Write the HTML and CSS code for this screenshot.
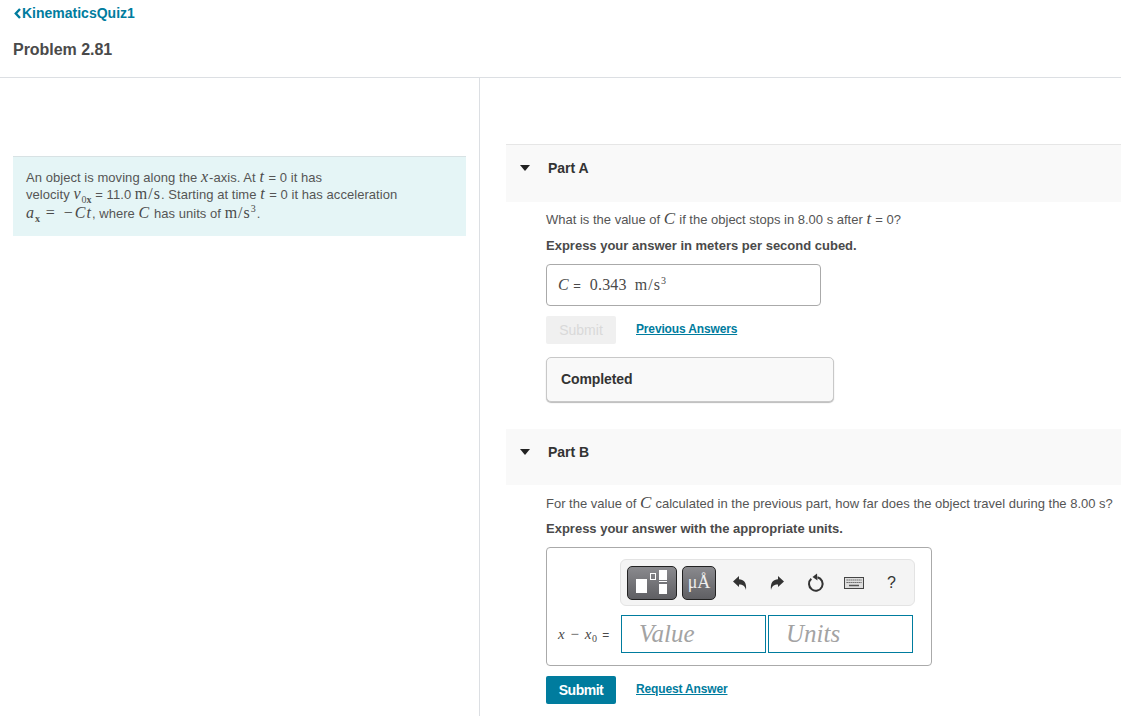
FILE: index.html
```html
<!DOCTYPE html>
<html lang="en">
<head>
<meta charset="utf-8">
<title>Problem 2.81</title>
<link rel="stylesheet" href="styles.css">
</head>
<body>
<header class="top">
  <a class="back" href="#"><svg class="chev" width="7" height="11" viewBox="0 0 7 11"><path d="M6 1 1.800 5.500 6 10" fill="none" stroke="#007c9e" stroke-width="2.400"/></svg>KinematicsQuiz1</a>
  <h1 class="title">Problem 2.81</h1>
</header>
<main class="columns">
  <aside class="left">
    <div class="intro">
      <div class="l1">An object is moving along the <i class="m">x</i>-axis. At <i class="m">t</i> = 0 it has</div>
      <div class="l2">velocity <i class="m">v</i><sub class="s">0<b>x</b></sub> = 11.0 <span class="m">m/s</span>. Starting at time <i class="m">t</i> = 0 it has acceleration</div>
      <div class="l3"><i class="m">a</i><sub class="s"><b>x</b></sub> <span class="m op">= −</span><i class="m">Ct</i>, where <i class="m">C</i> has units of <span class="m">m/s<sup class="p">3</sup></span>.</div>
    </div>
  </aside>
  <section class="right">
    <div class="part-head part-a"><svg class="tri" width="10" height="6" viewBox="0 0 10 6"><path d="M0 0H10L5 6Z" fill="#222"/></svg><span class="part-name">Part A</span></div>
    <div class="part-body">
      <p class="q">What is the value of <i class="m big">C</i> if the object stops in 8.00 s after <i class="m big">t</i> = 0?</p>
      <p class="ex">Express your answer in meters per second cubed.</p>
      <div class="answer"><i class="m big">C</i><span class="eq">=</span><span class="m val">0.343</span><span class="m unit">m/s<sup class="p">3</sup></span></div>
      <div class="actions"><span class="btn off">Submit</span><a class="link" href="#">Previous Answers</a></div>
      <div class="done">Completed</div>
    </div>
    <div class="part-head part-b"><svg class="tri" width="10" height="6" viewBox="0 0 10 6"><path d="M0 0H10L5 6Z" fill="#222"/></svg><span class="part-name">Part B</span></div>
    <div class="part-body">
      <p class="q q2">For the value of <i class="m big">C</i> calculated in the previous part, how far does the object travel during the 8.00 s?</p>
      <p class="ex ex2">Express your answer with the appropriate units.</p>
      <div class="editor">
        <div class="toolbar">
          <span class="tool wide"><svg width="44" height="28" viewBox="0 0 44 28"><rect x="6" y="10" width="11" height="14" fill="#fff"/><rect x="20.500" y="4.500" width="5" height="6" fill="none" stroke="#fff"/><rect x="29" y="1" width="8" height="10" fill="#fff"/><rect x="29" y="12" width="8" height="1" fill="#fff"/><rect x="29" y="15" width="8" height="10" fill="#fff"/></svg></span>
          <span class="tool mu">μÅ</span>
          <span class="icons">
            <svg class="ic" width="16" height="16" viewBox="0 0 16 16"><path d="M1 6.500 7 1V4.200C11.500 4.200 15 7.500 14 15 13 11 11 9.500 7 9.500V12Z" fill="#333"/></svg>
            <svg class="ic" width="16" height="16" viewBox="0 0 16 16"><path d="M15 6.500 9 1V4.200C4.500 4.200 1 7.500 2 15 3 11 5 9.500 9 9.500V12Z" fill="#333"/></svg>
            <svg class="ic" width="18" height="20" viewBox="0 0 18 20"><path d="M10.500 4.300A6.800 6.800 0 1 1 4.300 5.800" fill="none" stroke="#333" stroke-width="2"/><path d="M10 0.500 5.500 4 10.500 7.500Z" fill="#333"/></svg>
            <svg class="ic" width="20" height="12" viewBox="0 0 20 12"><rect x=".5" y=".5" width="19" height="11" fill="#ddd" stroke="#444"/><path d="M2.500 3H17.500M2.500 5.500H17.500" stroke="#555" stroke-dasharray="1.300 .7"/><path d="M5 8.500H15" stroke="#555" stroke-width="1.500"/></svg>
            <span class="help">?</span>
          </span>
        </div>
        <div class="entry">
          <span class="lhs"><i class="m">x</i> <span class="m">−</span> <i class="m">x</i><sub class="s">0</sub> =</span>
          <span class="field">Value</span><span class="field f2">Units</span>
        </div>
      </div>
      <div class="actions a2"><span class="btn on">Submit</span><a class="link" href="#">Request Answer</a></div>
    </div>
  </section>
</main>
</body>
</html>
```
FILE: styles.css
```css
* { box-sizing: border-box; }
html, body { margin: 0; height: 716px; overflow: hidden; background: #fff; }
body { font-family: "Liberation Sans", Arial, sans-serif; font-size: 13px; color: #555; }
.top { height: 78px; border-bottom: 1px solid #dcdfe3; padding: 5px 13px 0; }
.back { display: flex; align-items: center; gap: 1px; height: 16px; color: #007c9e; font-size: 14px; font-weight: bold; text-decoration: none; }
.chev { flex: none; margin-left: 1px; }
.title { margin: 19px 0 0; font-size: 16px; line-height: 20px; font-weight: bold; color: #4a4a4a; letter-spacing: -.04px; }
.columns { display: flex; height: 638px; }
.left { width: 480px; flex: none; border-right: 1px solid #dcdfe3; padding: 78px 13px 0; }
.intro { height: 80px; background: #e5f5f6; border-top: 1px solid #d8e2e4; padding: 11px 13px 0; }
.l1, .l2, .l3 { height: 18px; line-height: 18px; white-space: nowrap; letter-spacing: .05px; }
.l2 { margin-top: -1px; }
.l3 { margin-top: 1px; }
.intro .m { font-size: 16px; letter-spacing: 1px; }
.intro .op { word-spacing: 3px; margin: 0 1px 0 2px; }
.m { font-family: "Liberation Serif", "Times New Roman", serif; font-size: 15px; color: #4a4a4a; letter-spacing: .5px; }
.big { font-size: 17px; }
.s { font-family: "Liberation Serif", serif; font-size: 10px; line-height: 0; }
.p { font-size: 10px; line-height: 0; }
.right { flex: 1; min-width: 0; padding: 66px 0 0 26px; }
.part-head { display: flex; align-items: flex-start; background: #f9f9f9; color: #333; }
.part-a { height: 58px; border-top: 1px solid #e6e6e6; padding: 19px 0 0 14px; }
.part-b { height: 56px; margin-top: 27px; padding: 19px 0 0 14px; }
.tri { flex: none; margin: 1px 18px 0 0; }
.part-name { font-weight: bold; font-size: 14px; line-height: 15px; color: #333; position: relative; top: -3px; }
.part-body { padding-left: 40px; }
.q { margin: 8px 0 0; height: 18px; line-height: 18px; white-space: nowrap; }
.q2 { margin-top: 9px; }
.ex { margin: 9px 0 0; height: 18px; line-height: 18px; font-weight: bold; font-size: 13px; color: #4a4a4a; white-space: nowrap; }
.ex2 { margin-top: 8px; }
.answer { display: flex; align-items: center; width: 275px; height: 42px; margin-top: 9px; border: 1px solid #aaa; border-radius: 4px; padding-left: 11px; color: #4a4a4a; }
.answer .big { font-size: 16px; }
.eq { margin: 0 9px 0 4px; font-size: 13px; }
.val { font-size: 16px; letter-spacing: .2px; }
.unit { margin-left: 8px; font-size: 16px; letter-spacing: 1px; }
.actions { display: flex; align-items: flex-start; margin-top: 10px; gap: 20px; }
.btn { width: 70px; height: 28px; border-radius: 2px; font-size: 14px; line-height: 28px; text-align: center; }
.off { background: #f0f0f0; color: #d9d9d9; }
.on { background: #007c9e; color: #fff; font-weight: bold; letter-spacing: -.5px; }
.link { margin-top: 6px; font-size: 12px; line-height: 14px; font-weight: bold; color: #007c9e; text-decoration: underline; letter-spacing: -.15px; }
.done { width: 288px; height: 45px; margin-top: 13px; border: 1px solid #c8c8c8; border-radius: 5px; background: #f9f9f9; box-shadow: 0 1px 1px #bbb; padding-left: 14px; line-height: 42px; font-size: 14px; font-weight: bold; color: #333; letter-spacing: -.1px; }
.editor { width: 386px; height: 119px; margin-top: 9px; border: 1px solid #aaa; border-radius: 4px; padding: 11px 0 0 73px; }
.toolbar { display: flex; align-items: center; width: 295px; height: 47px; background: #f4f4f4; border: 1px solid #e3e3e3; border-radius: 6px; padding-left: 6px; gap: 5px; }
.tool { display: flex; align-items: center; justify-content: center; height: 34px; border: 1px solid #222; border-radius: 5px; background: linear-gradient(#8a8a8e, #5f5f63); color: #fff; }
.wide { width: 50px; }
.mu { width: 34px; font-family: "Liberation Serif", serif; font-size: 18px; color: #eee; }
.icons { display: flex; align-items: center; margin-left: 11px; }
.ic { flex: none; margin-right: 21px; }
.ic:nth-child(2) { margin-right: 22px; }
.ic:nth-child(3) { margin-right: 19px; }
.ic:nth-child(4) { margin-right: 23px; }
.help { font-size: 16px; color: #333; }
.entry { display: flex; align-items: center; height: 38px; margin: 9px 0 0 -63px; }
.lhs { width: 64px; padding-left: 1px; font-size: 12px; color: #4a4a4a; white-space: nowrap; word-spacing: 2px; }
.lhs .m { font-size: 15px; }
.field { width: 145px; height: 38px; border: 1px solid #007c9e; padding-left: 17px; font-family: "Liberation Serif", serif; font-style: italic; font-size: 25px; line-height: 36px; color: #a3a3a3; }
.f2 { margin-left: 2px; }
.a2 { margin-top: 10px; }
```
